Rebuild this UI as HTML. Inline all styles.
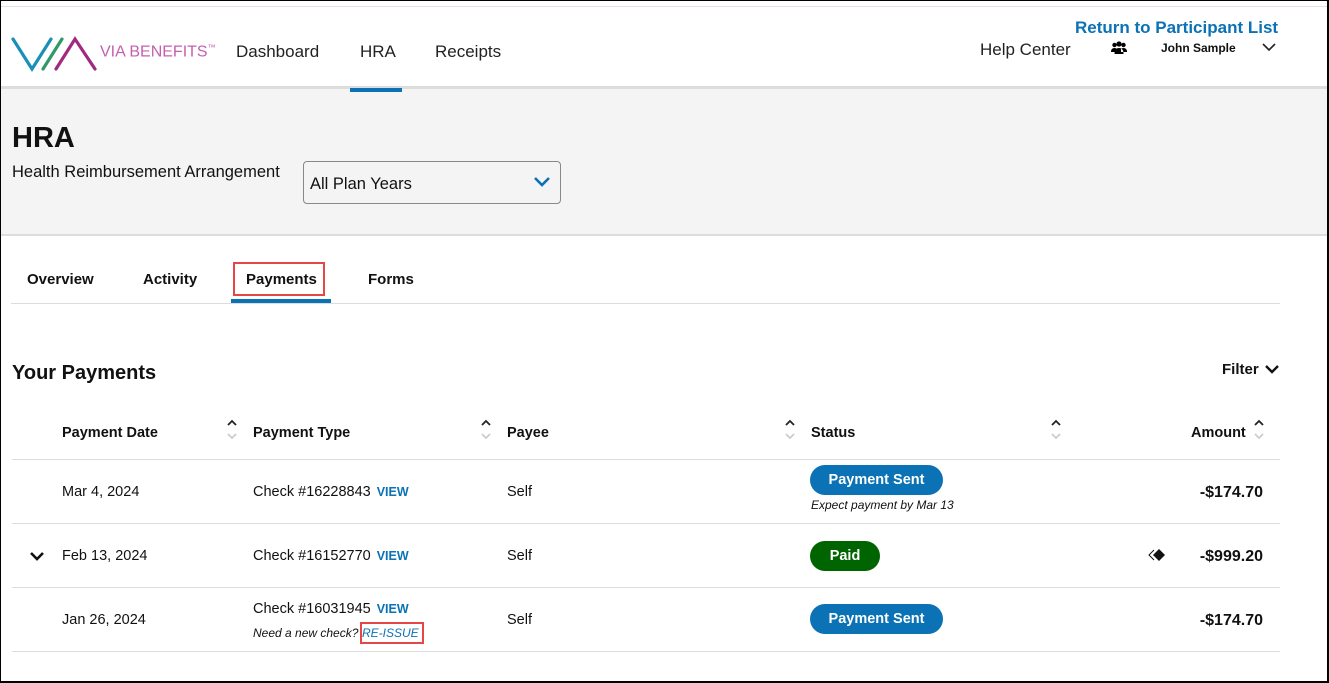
<!DOCTYPE html>
<html><head><meta charset="utf-8"><style>
*{box-sizing:border-box;margin:0;padding:0}
body{width:1329px;height:683px;overflow:hidden;background:#fff;font-family:"Liberation Sans",Arial,sans-serif;color:#111;position:relative}
.frame{position:absolute;left:0;top:0;width:1329px;height:683px;border:1px solid #000;border-right:2px solid #000;border-bottom:2px solid #000;pointer-events:none;z-index:9}
.a{position:absolute;white-space:nowrap}
.hdr{position:absolute;left:0;top:0;width:1329px;height:89px;border-top:7px solid #fff;border-bottom:3px solid #ddd}
.pl{position:absolute;left:1px;top:6px;width:1326px;height:1px;background:#eadcec}
.band{position:absolute;left:0;top:89px;width:1329px;height:147px;background:#f4f4f4;border-bottom:2px solid #ddd}
.nav{font-size:17px;top:42px;color:#222}
.th{font-weight:bold;font-size:14.5px;top:425px}
.row{position:absolute;left:12px;width:1268px;height:1px;background:#ddd}
.td{font-size:14.5px}
.view{color:#0a72b5;font-weight:bold;font-size:12.5px;margin-left:6px}
.pill{position:absolute;height:30px;border-radius:15px;color:#fff;font-weight:bold;font-size:14.5px;text-align:center;line-height:30px}
.amt{font-weight:bold;font-size:16px;right:66px}
.sort{position:absolute;width:12px;height:22px}
</style></head><body>
<div class="frame"></div>
<div class="hdr"></div><div class="pl"></div>
<svg class="a" style="left:10px;top:36px" width="90" height="36" viewBox="10 36 90 36">
<path d="M13 39 L32 69 L51 39" stroke="#1a8fb8" stroke-width="3.2" fill="none" stroke-linecap="round"/>
<path d="M43 69 L62 39" stroke="#2e9a6a" stroke-width="3.2" fill="none" stroke-linecap="round"/>
<path d="M56 69 L75 39 L95 69" stroke="#a02a7e" stroke-width="3.2" fill="none" stroke-linecap="round"/>
</svg>
<div class="a" style="left:100px;top:43px;font-size:16px;color:#c45fae">VIA BENEFITS<sup style="font-size:8px">™</sup></div>
<div class="a nav" style="left:236px">Dashboard</div>
<div class="a nav" style="left:360px">HRA</div>
<div class="a nav" style="left:435px">Receipts</div>
<div class="a" style="left:350px;top:88px;width:52px;height:4px;background:#0a72b5;z-index:2"></div>
<div class="a" style="left:1075px;top:18px;font-size:17px;font-weight:bold;color:#0a72b5">Return to Participant List</div>
<div class="a" style="left:980px;top:40px;font-size:17px;color:#222">Help Center</div>
<svg class="a" style="left:1111px;top:41px" width="16" height="14" viewBox="0 0 16 14"><circle cx="3.5" cy="4" r="2.2"/><circle cx="12.5" cy="4" r="2.2"/><circle cx="8" cy="3" r="2.6"/><path d="M0 11 Q0 7 3.5 7 Q6 7 6 9 L6 11Z M16 11 Q16 7 12.5 7 Q10 7 10 9 L10 11Z M3.5 13 Q3.5 7 8 7 Q12.5 7 12.5 13Z"/></svg>
<div class="a" style="left:1161px;top:41px;font-size:12px;font-weight:bold">John Sample</div>
<svg class="a" style="left:1262px;top:42px" width="14" height="10"><path d="M1 2 L7 8 L13 2" stroke="#222" stroke-width="1.6" fill="none"/></svg>
<div class="band"></div>
<div class="a" style="left:12px;top:122px;font-size:29px;font-weight:bold">HRA</div>
<div class="a" style="left:12px;top:163px;font-size:16.5px">Health Reimbursement Arrangement</div>
<div class="a" style="left:303px;top:161px;width:258px;height:43px;border:1px solid #888;border-radius:4px;background:#f4f4f4"></div>
<div class="a" style="left:310px;top:175px;font-size:16.5px">All Plan Years</div>
<svg class="a" style="left:533px;top:176px" width="18" height="12"><path d="M2 2 L9 9 L16 2" stroke="#0a72b5" stroke-width="2.6" fill="none"/></svg>
<div class="a" style="left:11px;top:303px;width:1269px;height:1px;background:#ddd"></div>
<div class="a" style="left:27px;top:271px;font-size:15px;font-weight:bold">Overview</div>
<div class="a" style="left:143px;top:271px;font-size:15px;font-weight:bold">Activity</div>
<div class="a" style="left:233px;top:262px;width:92px;height:34px;border:2px solid #e84545"></div>
<div class="a" style="left:246px;top:271px;font-size:15px;font-weight:bold">Payments</div>
<div class="a" style="left:231px;top:299px;width:100px;height:4px;background:#0a72b5"></div>
<div class="a" style="left:368px;top:271px;font-size:15px;font-weight:bold">Forms</div>
<div class="a" style="left:12px;top:362px;font-size:20px;font-weight:bold">Your Payments</div>
<div class="a" style="left:1222px;top:361px;font-size:15px;font-weight:bold">Filter</div>
<svg class="a" style="left:1265px;top:364px" width="14" height="10"><path d="M1 2 L7 8 L13 2" stroke="#111" stroke-width="2.4" fill="none"/></svg>
<div class="a th" style="left:62px">Payment Date</div>
<div class="a th" style="left:253px">Payment Type</div>
<div class="a th" style="left:507px">Payee</div>
<div class="a th" style="left:811px">Status</div>
<div class="a th" style="left:1191px">Amount</div>
<svg width="0" height="0"><defs><g id="s"><path d="M2 6 L6 2 L10 6" stroke="#222" stroke-width="1.8" fill="none"/><path d="M2 15 L6 19 L10 15" stroke="#ccc" stroke-width="1.8" fill="none"/></g></defs></svg>
<svg class="sort" style="left:226px;top:419px"><use href="#s"/></svg>
<svg class="sort" style="left:480px;top:419px"><use href="#s"/></svg>
<svg class="sort" style="left:784px;top:419px"><use href="#s"/></svg>
<svg class="sort" style="left:1050px;top:419px"><use href="#s"/></svg>
<svg class="sort" style="left:1253px;top:419px"><use href="#s"/></svg>
<div class="row" style="top:459px"></div>
<div class="row" style="top:523px"></div>
<div class="row" style="top:587px"></div>
<div class="row" style="top:651px"></div>
<div class="a td" style="left:62px;top:484px">Mar 4, 2024</div>
<div class="a td" style="left:253px;top:484px">Check #16228843<span class="view">VIEW</span></div>
<div class="a td" style="left:507px;top:484px">Self</div>
<div class="pill" style="left:810px;top:465px;width:133px;background:#0a72b5">Payment Sent</div>
<div class="a" style="left:811px;top:498px;font-size:12px;font-style:italic">Expect payment by Mar 13</div>
<div class="a amt" style="top:484px">-$174.70</div>
<svg class="a" style="left:29px;top:551px" width="16" height="12"><path d="M2 2 L8 8 L14 2" stroke="#111" stroke-width="2.6" fill="none"/></svg>
<div class="a td" style="left:62px;top:548px">Feb 13, 2024</div>
<div class="a td" style="left:253px;top:548px">Check #16152770<span class="view">VIEW</span></div>
<div class="a td" style="left:507px;top:548px">Self</div>
<div class="pill" style="left:810px;top:541px;width:70px;background:#006400">Paid</div>
<svg class="a" style="left:1148px;top:548px" width="20" height="14"><path d="M6 2 L1 7 L6 12" stroke="#111" stroke-width="1" fill="none"/><path d="M11 1 L17 7 L11 13 L5 7Z" fill="#111"/></svg>
<div class="a amt" style="top:548px">-$999.20</div>
<div class="a td" style="left:62px;top:612px">Jan 26, 2024</div>
<div class="a td" style="left:253px;top:601px">Check #16031945<span class="view">VIEW</span></div>
<div class="a" style="left:253px;top:626px;font-size:12px;font-style:italic">Need a new check?</div>
<div class="a" style="left:360px;top:622px;width:64px;height:22px;border:2px solid #e84545"></div>
<div class="a" style="left:362px;top:626px;font-size:12px;font-style:italic;color:#0a72b5">RE-ISSUE</div>
<div class="a td" style="left:507px;top:612px">Self</div>
<div class="pill" style="left:810px;top:604px;width:133px;background:#0a72b5">Payment Sent</div>
<div class="a amt" style="top:612px">-$174.70</div>
</body></html>
